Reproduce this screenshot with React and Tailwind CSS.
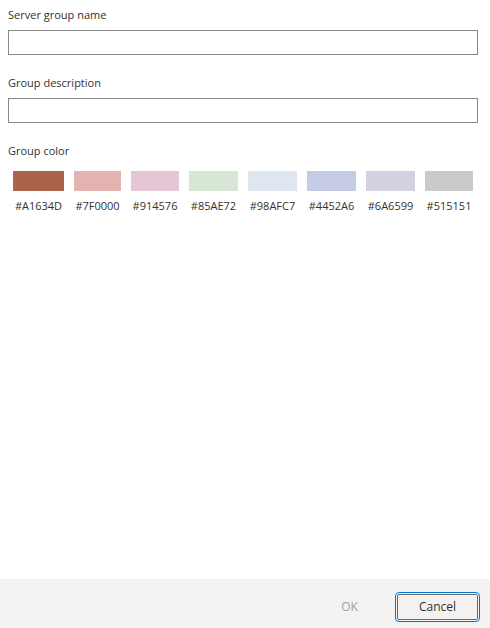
const colors = [
  { name: '#A1634D', bg: 'bg-[#ad624b]', w: 'w-[51px]' },
  { name: '#7F0000', bg: 'bg-[#e4b3b1]', w: 'w-[47px]' },
  { name: '#914576', bg: 'bg-[#e4c6d6]', w: 'w-[48px]' },
  { name: '#85AE72', bg: 'bg-[#d8e6d6]', w: 'w-[49px]' },
  { name: '#98AFC7', bg: 'bg-[#dee6ef]', w: 'w-[49px]' },
  { name: '#4452A6', bg: 'bg-[#c5cae5]', w: 'w-[49px]' },
  { name: '#6A6599', bg: 'bg-[#d3d1e0]', w: 'w-[49px]' },
  { name: '#515151', bg: 'bg-[#cacaca]', w: 'w-[48px]' },
];

function Field({ label, first }) {
  return (
    <div className={first ? 'pt-[7px]' : 'pt-[20px]'}>
      <label className="block h-4 text-[11px] leading-4 text-[#323130]">{label}</label>
      <input
        type="text"
        className="mt-[7px] block h-[25px] w-[470px] border border-[#8a8886] bg-white px-2 text-[11px] outline-none"
      />
    </div>
  );
}

export default function App() {
  return (
    <div className="flex h-[628px] w-[490px] flex-col bg-white font-['Segoe_UI','Open_Sans',sans-serif] text-[#323130]">
      <div className="flex-1 px-2">
        <Field label="Server group name" first />
        <Field label="Group description" />

        {/* color picker */}
        <div className="pt-[20px]">
          <div className="h-4 text-[11px] leading-4">Group color</div>
          <div className="mt-[12px] ml-[5px] flex gap-[10px]">
            {colors.map((c) => (
              <div key={c.name} className={`flex flex-col items-center ${c.w}`}>
                <div className={`h-5 w-full ${c.bg}`} />
                <span className="mt-[7px] h-4 whitespace-nowrap text-[11px] leading-4">{c.name}</span>
              </div>
            ))}
          </div>
        </div>
      </div>

      <div className="flex h-[49px] items-start justify-end gap-[7px] bg-[#f3f3f3] pr-[12px] pt-[15px]">
        <button disabled className="h-[26px] w-[81px] text-[12px] text-[#a19f9d]">OK</button>
        <button className="h-[26px] w-[81px] rounded-[2px] border border-[#6b6b6b] bg-[#f3f2f1] text-[12px] text-[#323130] outline outline-1 outline-offset-1 outline-[#0078d4]">
          Cancel
        </button>
      </div>
    </div>
  );
}
